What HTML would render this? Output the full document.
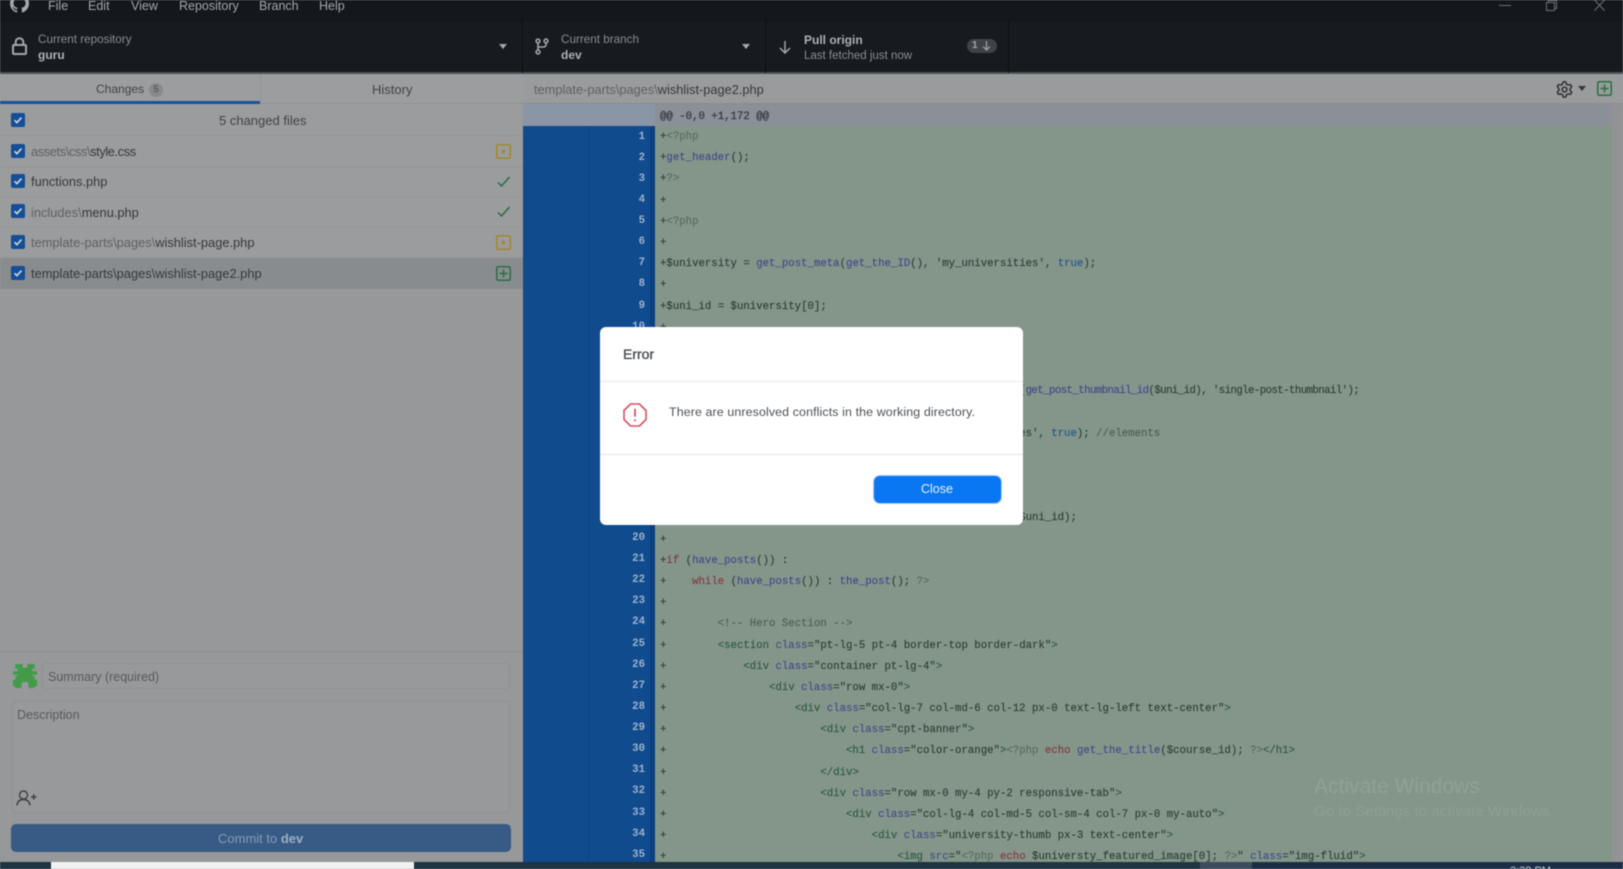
<!DOCTYPE html>
<html lang="en"><head><meta charset="utf-8"><title>GitHub Desktop</title>
<style>
*{box-sizing:border-box}
html,body{margin:0;padding:0;width:1623px;height:869px;overflow:hidden;background:#9b9d9e}
body{font-family:"Liberation Sans",sans-serif;position:relative}
.a{position:absolute}
.t{white-space:nowrap;position:absolute}
#root{position:absolute;left:0;top:0;width:1623px;height:869px;overflow:hidden;filter:blur(.45px)}
.menu{position:absolute;top:-2px;font-size:12.5px;line-height:16px;color:#a3a7ac}
.lab{font-size:11.7px;color:#888d92}
.val{font-size:12px;font-weight:bold;color:#adb1b5}
.row{position:absolute;left:0;width:523px;border-bottom:1px solid #949697;background:#9a9c9d}
.cb{position:absolute;left:11px;width:14px;height:14px;border-radius:2px;background:#144e96}
.cb svg{position:absolute;left:0;top:0}
.fn{position:absolute;left:31px;font-size:12.85px;line-height:16px;color:#36393d;white-space:nowrap}
.fn i{font-style:normal;color:#5f6265}
.st{position:absolute;left:496px;width:15px;height:15px}
#nums{position:absolute;left:588px;top:126.5px;width:57px;text-align:right;font:bold 10.7px/21.13px "Liberation Mono",monospace;color:#9cb2cd}
#nums div{height:21.13px}
#code{position:absolute;left:660px;top:127px;width:950px;height:735px;overflow:hidden;font:10.7px/21.19px "Liberation Mono",monospace;color:#2f3f37;-webkit-text-stroke:.15px currentColor}
#code div{height:21.19px;white-space:pre}
.g{color:#2f5a3e}.v{color:#464c86}.p{color:#5a6a5f}.f{color:#484789}.k{color:#843b3e}.c{color:#4e6056}.b{color:#25558c}
</style></head>
<body>
<div id="root">
<!-- title bar -->
<div class="a" style="left:0;top:0;width:1623px;height:20px;background:#14181c"></div>
<svg class="a" style="left:10px;top:-6px" width="19" height="19" viewBox="0 0 16 16"><path fill="#a6a9ad" d="M8 0C3.58 0 0 3.58 0 8c0 3.54 2.29 6.53 5.47 7.59.4.07.55-.17.55-.38 0-.19-.01-.82-.01-1.49-2.01.37-2.53-.49-2.69-.94-.09-.23-.48-.94-.82-1.13-.28-.15-.68-.52-.01-.53.63-.01 1.08.58 1.23.82.72 1.21 1.87.87 2.33.66.07-.52.28-.87.51-1.07-1.78-.2-3.64-.89-3.64-3.95 0-.87.31-1.59.82-2.15-.08-.2-.36-1.02.08-2.12 0 0 .67-.21 2.2.82.64-.18 1.32-.27 2-.27s1.36.09 2 .27c1.53-1.04 2.2-.82 2.2-.82.44 1.1.16 1.92.08 2.12.51.56.82 1.27.82 2.15 0 3.07-1.87 3.75-3.65 3.95.29.25.54.73.54 1.48 0 1.07-.01 1.93-.01 2.2 0 .21.15.46.55.38A8.01 8.01 0 0 0 16 8c0-4.42-3.58-8-8-8z"/></svg>
<div class="menu" style="left:48px">File</div>
<div class="menu" style="left:88px">Edit</div>
<div class="menu" style="left:131px">View</div>
<div class="menu" style="left:179px">Repository</div>
<div class="menu" style="left:259px">Branch</div>
<div class="menu" style="left:319px">Help</div>
<div class="a" style="left:1499px;top:5px;width:12px;height:1px;background:#6d7074"></div>
<svg class="a" style="left:1545px;top:0" width="12" height="11" viewBox="0 0 12 11"><path fill="none" stroke="#6d7074" d="M1.5 2.5h8v8h-8zM3.5 2.5V.5h8v8h-2"/></svg>
<svg class="a" style="left:1594px;top:0" width="11" height="11" viewBox="0 0 11 11"><path fill="none" stroke="#6d7074" d="M.5 0l10 10.5M10.5 0L.5 10.5"/></svg>
<!-- toolbar -->
<div class="a" style="left:0;top:20px;width:1623px;height:53px;background:#171b1f;border-top:1px solid #111418"></div>
<div class="a" style="left:0;top:72px;width:1623px;height:2px;background:#505356"></div>
<svg class="a" style="left:12px;top:37px" width="15" height="18" viewBox="0 0 15 18"><path fill="none" stroke="#a3a6aa" stroke-width="2" d="M2 8h11a1 1 0 0 1 1 1v7a1 1 0 0 1-1 1H2a1 1 0 0 1-1-1V9a1 1 0 0 1 1-1zM3.7 8V5a3.8 3.8 0 0 1 7.6 0v3"/></svg>
<div class="t lab" style="left:38px;top:33px">Current repository</div>
<div class="t val" style="left:38px;top:48px">guru</div>
<div class="a" style="left:499px;top:44px;border:4px solid transparent;border-top:5px solid #a3a6aa"></div>
<div class="a" style="left:522px;top:20px;width:1px;height:53px;background:#0d0f12"></div>
<svg class="a" style="left:535px;top:38px" width="14" height="17" viewBox="0 0 14 17"><g fill="none" stroke="#a3a6aa" stroke-width="1.6"><circle cx="3" cy="3" r="1.9"/><circle cx="11" cy="3" r="1.9"/><circle cx="3" cy="14" r="1.9"/><path d="M3 5v7M11 5v1.5a2.5 2.5 0 0 1-2.5 2.5H3"/></g></svg>
<div class="t lab" style="left:561px;top:33px">Current branch</div>
<div class="t val" style="left:561px;top:48px">dev</div>
<div class="a" style="left:742px;top:44px;border:4px solid transparent;border-top:5px solid #a3a6aa"></div>
<div class="a" style="left:765px;top:20px;width:1px;height:53px;background:#0d0f12"></div>
<svg class="a" style="left:779px;top:40px" width="12" height="14" viewBox="0 0 12 14"><path fill="none" stroke="#a3a6aa" stroke-width="1.5" d="M6 1v12M1 8l5 5 5-5"/></svg>
<div class="t val" style="left:804px;top:33px">Pull origin</div>
<div class="t lab" style="left:804px;top:50px;font-size:11.5px">Last fetched just now</div>
<div class="a" style="left:967px;top:39px;width:30px;height:14px;border-radius:7px;background:#3f4347"></div>
<div class="t" style="left:972px;top:40px;font-size:10px;font-weight:bold;color:#a3a6aa">1</div>
<svg class="a" style="left:982px;top:41px" width="9" height="10" viewBox="0 0 9 10"><path fill="none" stroke="#a3a6aa" stroke-width="1.2" d="M4.5 0v9M1 5.5L4.5 9 8 5.5"/></svg>
<div class="a" style="left:1008px;top:20px;width:1px;height:53px;background:#0d0f12"></div>
<!-- left panel -->
<div class="a" style="left:0;top:74px;width:523px;height:788px;background:#96989a"></div>
<div class="a" style="left:0;top:74px;width:523px;height:30px;background:#9c9d9f;border-bottom:1px solid #909293"></div>
<div class="t" style="left:96px;top:82px;font-size:12px;line-height:15px;color:#414448">Changes</div>
<div class="a" style="left:149px;top:83px;width:14px;height:14px;border-radius:7px;background:#87898b;color:#44474b;font-size:9.5px;line-height:14px;text-align:center">5</div>
<div class="a" style="left:0;top:101px;width:260px;height:3px;background:#17539c"></div>
<div class="a" style="left:260px;top:74px;width:1px;height:30px;background:#939596"></div>
<div class="t" style="left:372px;top:82px;font-size:13px;color:#414448">History</div>
<!-- rows -->
<div class="row" style="top:104px;height:32px"><div class="cb" style="top:9px"><svg width="14" height="14" viewBox="0 0 14 14"><path fill="none" stroke="#c8d2dc" stroke-width="1.7" d="M3.500 7.200l2.400 2.400 4.600-5"/></svg></div><div class="t" style="left:219px;top:9px;font-size:13px;color:#414448">5 changed files</div></div>
<div class="row" style="top:136px;height:31px"><div class="cb" style="top:8px"><svg width="14" height="14" viewBox="0 0 14 14"><path fill="none" stroke="#c8d2dc" stroke-width="1.7" d="M3.500 7.200l2.400 2.400 4.600-5"/></svg></div><div class="fn" style="top:8px;letter-spacing:-.4px"><i>assets\css\</i>style.css</div>
<svg class="st" style="top:8px" viewBox="0 0 15 15"><rect x=".75" y=".75" width="13.500" height="13.500" rx="1.500" fill="none" stroke="#a4872a" stroke-width="1.500"/><circle cx="7.500" cy="7.500" r="1.800" fill="#a4872a"/></svg></div>
<div class="row" style="top:167px;height:30px"><div class="cb" style="top:7px"><svg width="14" height="14" viewBox="0 0 14 14"><path fill="none" stroke="#c8d2dc" stroke-width="1.7" d="M3.500 7.200l2.400 2.400 4.600-5"/></svg></div><div class="fn" style="top:7px">functions.php</div>
<svg class="st" style="top:7px" viewBox="0 0 15 15"><path fill="none" stroke="#277044" stroke-width="1.500" d="M2 8.500l3.500 3.500L13.500 3"/></svg></div>
<div class="row" style="top:197px;height:31px"><div class="cb" style="top:7px"><svg width="14" height="14" viewBox="0 0 14 14"><path fill="none" stroke="#c8d2dc" stroke-width="1.7" d="M3.500 7.200l2.400 2.400 4.600-5"/></svg></div><div class="fn" style="top:8px"><i>includes\</i>menu.php</div>
<svg class="st" style="top:7px" viewBox="0 0 15 15"><path fill="none" stroke="#277044" stroke-width="1.500" d="M2 8.500l3.500 3.500L13.500 3"/></svg></div>
<div class="row" style="top:228px;height:30px"><div class="cb" style="top:7px"><svg width="14" height="14" viewBox="0 0 14 14"><path fill="none" stroke="#c8d2dc" stroke-width="1.7" d="M3.500 7.200l2.400 2.400 4.600-5"/></svg></div><div class="fn" style="top:7px"><i>template-parts\pages\</i>wishlist-page.php</div>
<svg class="st" style="top:7px" viewBox="0 0 15 15"><rect x=".75" y=".75" width="13.500" height="13.500" rx="1.500" fill="none" stroke="#a4872a" stroke-width="1.500"/><circle cx="7.500" cy="7.500" r="1.800" fill="#a4872a"/></svg></div>
<div class="row" style="top:258px;height:31px;background:#898c8e;border-bottom:1px solid #898c8e"><div class="cb" style="top:8px"><svg width="14" height="14" viewBox="0 0 14 14"><path fill="none" stroke="#c8d2dc" stroke-width="1.7" d="M3.500 7.200l2.400 2.400 4.600-5"/></svg></div><div class="fn" style="top:8px"><i style="color:#36393d">template-parts\pages\wishlist-page2.php</i></div>
<svg class="st" style="top:8px" viewBox="0 0 15 15"><rect x=".75" y=".75" width="13.500" height="13.500" rx="1.500" fill="none" stroke="#277044" stroke-width="1.500"/><path stroke="#277044" stroke-width="1.500" d="M7.500 3.500v8M3.500 7.500h8"/></svg></div>
<!-- commit area -->
<div class="a" style="left:0;top:651px;width:523px;height:1px;background:#8c8e8f"></div>
<svg class="a" style="left:13px;top:664px" width="24" height="24" viewBox="0 0 10 10"><path fill="#439a48" d="M1 0h3v1.500h2V0h3v2H8v1h2v1.500H8V5h1v1.500h1V9L8.500 10H6.500V8.500L6 7.500H4L3.500 8.500V10h-2L0 9V6.500h1V5h1v-.5H0V3h2V2H1z"/></svg>
<div class="a" style="left:42px;top:663px;width:468px;height:26px;border:1px solid #8f9192;border-radius:4px;background:#97999a"></div>
<div class="t" style="left:48px;top:670px;font-size:12.5px;color:#585b5e">Summary (required)</div>
<div class="a" style="left:12px;top:701px;width:498px;height:112px;border:1px solid #8f9192;border-radius:4px;background:#97999a"></div>
<div class="t" style="left:17px;top:708px;font-size:12.5px;color:#585b5e">Description</div>
<svg class="a" style="left:16px;top:790px" width="21" height="16" viewBox="0 0 21 16"><g fill="none" stroke="#3f4246" stroke-width="1.4"><circle cx="7.500" cy="5" r="4"/><path d="M1 15.500c.3-3.800 2.600-6 6.500-6s6 2.200 6.500 6M15 7h5.500M17.700 4.300v5.500"/></g></svg>
<div class="a" style="left:11px;top:824px;width:500px;height:28px;border-radius:5px;background:#375b84"></div>
<div class="t" style="left:218px;top:831px;font-size:13px;color:#839cb7">Commit to <b style="color:#9cafc3">dev</b></div>
<!-- right header -->
<div class="a" style="left:523px;top:74px;width:1100px;height:30px;background:#999b9d;border-bottom:1px solid #8c8e8f"></div>
<div class="t" style="left:534px;top:82px;font-size:12.8px;color:#5f6265">template-parts\pages\<span style="color:#36393d">wishlist-page2.php</span></div>
<svg class="a" style="left:1556px;top:81px" width="17" height="17" viewBox="0 0 16 16"><path fill="#33363a" d="M8 0a8.200 8.200 0 0 1 .701.031C9.444.095 9.990.645 10.160 1.290l.288 1.107c.018.066.079.158.212.224.231.114.454.243.668.386.123.082.233.090.299.071l1.103-.303c.644-.176 1.392.021 1.820.630.270.385.506.792.704 1.218.315.675.111 1.422-.364 1.891l-.814.806c-.049.048-.098.147-.088.294.016.257.016.515 0 .772-.010.147.038.246.088.294l.814.806c.475.469.679 1.216.364 1.891a7.977 7.977 0 0 1-.704 1.217c-.428.610-1.176.807-1.820.630l-1.102-.302c-.067-.019-.177-.011-.300.071a5.909 5.909 0 0 1-.668.386c-.133.066-.194.158-.211.224l-.290 1.106c-.168.646-.715 1.196-1.458 1.260a8.006 8.006 0 0 1-1.402 0c-.743-.064-1.289-.614-1.458-1.260l-.289-1.106c-.018-.066-.079-.158-.212-.224a5.738 5.738 0 0 1-.668-.386c-.123-.082-.233-.090-.299-.071l-1.103.303c-.644.176-1.392-.021-1.820-.630a8.120 8.120 0 0 1-.704-1.218c-.315-.675-.111-1.422.363-1.891l.815-.806c.050-.048.098-.147.088-.294a6.214 6.214 0 0 1 0-.772c.010-.147-.038-.246-.088-.294l-.815-.806C.635 6.045.431 5.298.746 4.623a7.920 7.920 0 0 1 .704-1.217c.428-.610 1.176-.807 1.820-.630l1.102.302c.067.019.177.011.300-.071.214-.143.437-.272.668-.386.133-.066.194-.158.211-.224l.290-1.106C6.009.645 6.556.095 7.299.030 7.530.010 7.764 0 8 0Zm-.571 1.525c-.036.003-.108.036-.137.146l-.289 1.105c-.147.561-.549.967-.998 1.189-.173.086-.340.183-.500.290-.417.278-.970.423-1.529.270l-1.103-.303c-.109-.030-.175.016-.195.045-.220.312-.412.644-.573.990-.014.031-.021.110.059.190l.815.806c.411.406.562.957.530 1.456a4.709 4.709 0 0 0 0 .582c.032.499-.119 1.050-.530 1.456l-.815.806c-.081.080-.073.159-.059.190.162.346.353.677.573.989.020.030.085.076.195.046l1.102-.303c.560-.153 1.113-.008 1.530.270.161.107.328.204.501.290.447.222.850.629.997 1.189l.289 1.105c.029.109.101.143.137.146a6.600 6.600 0 0 0 1.142 0c.036-.003.108-.036.137-.146l.289-1.105c.147-.561.549-.967.998-1.189.173-.086.340-.183.500-.290.417-.278.970-.423 1.529-.270l1.103.303c.109.029.175-.016.195-.045.220-.313.411-.644.573-.990.014-.031.021-.110-.059-.190l-.815-.806c-.411-.406-.562-.957-.530-1.456a4.709 4.709 0 0 0 0-.582c-.032-.499.119-1.050.530-1.456l.815-.806c.081-.080.073-.159.059-.190a6.464 6.464 0 0 0-.573-.989c-.020-.030-.085-.076-.195-.046l-1.102.303c-.560.153-1.113.008-1.530-.270a4.440 4.440 0 0 0-.501-.290c-.447-.222-.850-.629-.997-1.189l-.289-1.105c-.029-.110-.101-.143-.137-.146a6.600 6.600 0 0 0-1.142 0ZM11 8a3 3 0 1 1-6 0 3 3 0 0 1 6 0ZM9.500 8a1.500 1.500 0 1 0-3.001.001A1.500 1.500 0 0 0 9.500 8Z"/></svg>
<div class="a" style="left:1578px;top:86px;border:4px solid transparent;border-top:5px solid #33363a"></div>
<svg class="a" style="left:1597px;top:81px" width="15" height="15" viewBox="0 0 15 15"><rect x=".75" y=".75" width="13.500" height="13.500" rx="1.500" fill="none" stroke="#277044" stroke-width="1.500"/><path stroke="#277044" stroke-width="1.500" d="M7.500 3.500v8M3.500 7.500h8"/></svg>
<!-- diff -->
<div class="a" style="left:523px;top:104px;width:132px;height:22px;background:#8a96a6"></div>
<div class="a" style="left:655px;top:104px;width:957px;height:22px;background:#8a8f98"></div>
<div class="a" style="left:1612px;top:104px;width:11px;height:758px;background:#939395"></div>
<div class="a" style="left:523px;top:126px;width:132px;height:736px;background:#104b8e"></div>
<div class="a" style="left:588px;top:126px;width:1px;height:736px;background:#0b4280"></div>
<div class="a" style="left:650px;top:126px;width:5px;height:736px;background:#0a4084"></div>
<div class="a" style="left:655px;top:126px;width:957px;height:736px;background:#84968a"></div>
<div class="t" style="left:660px;top:107px;font:10.7px/21px 'Liberation Mono',monospace;color:#2e3339;-webkit-text-stroke:.15px currentColor">@@ -0,0 +1,172 @@</div>
<div id="nums"><div>1</div><div>2</div><div>3</div><div>4</div><div>5</div><div>6</div><div>7</div><div>8</div><div>9</div><div>10</div><div>11</div><div>12</div><div>13</div><div>14</div><div>15</div><div>16</div><div>17</div><div>18</div><div>19</div><div>20</div><div>21</div><div>22</div><div>23</div><div>24</div><div>25</div><div>26</div><div>27</div><div>28</div><div>29</div><div>30</div><div>31</div><div>32</div><div>33</div><div>34</div><div>35</div></div>
<div id="code">
<div>+<span class="p">&lt;?php</span></div>
<div>+<span class="f">get_header</span>();</div>
<div>+<span class="p">?&gt;</span></div>
<div>+</div>
<div>+<span class="p">&lt;?php</span></div>
<div>+</div>
<div>+$university = <span class="f">get_post_meta</span>(<span class="f">get_the_ID</span>(), 'my_universities', <span class="b">true</span>);</div>
<div>+</div>
<div>+$uni_id = $university[0];</div>
<div>+</div>
<div>+</div>
<div>+</div>
<div>+$universty_featured_image = wp_get_attachment_image_src(<span style="letter-spacing:-.56px"><span class="f">get_post_thumbnail_id</span>($uni_id), 'single-post-thumbnail');</span></div>
<div>+</div>
<div>+$university_features = get_post_meta($uni_id, 'uni_curses', <span class="b">true</span>); <span class="c">//elements</span></div>
<div>+</div>
<div>+</div>
<div>+</div>
<div>+$course_id = get_post_meta(get_the_ID(), 'my_courses', $uni_id);</div>
<div>+</div>
<div>+<span class="k">if</span> (<span class="f">have_posts</span>()) :</div>
<div>+    <span class="k">while</span> (<span class="f">have_posts</span>()) : <span class="f">the_post</span>(); <span class="p">?&gt;</span></div>
<div>+</div>
<div>+        <span class="c">&lt;!-- Hero Section --&gt;</span></div>
<div>+        <span class="g">&lt;section</span> <span class="v">class</span>="pt-lg-5 pt-4 border-top border-dark"<span class="g">&gt;</span></div>
<div>+            <span class="g">&lt;div</span> <span class="v">class</span>="container pt-lg-4"<span class="g">&gt;</span></div>
<div>+                <span class="g">&lt;div</span> <span class="v">class</span>="row mx-0"<span class="g">&gt;</span></div>
<div>+                    <span class="g">&lt;div</span> <span class="v">class</span>="col-lg-7 col-md-6 col-12 px-0 text-lg-left text-center"<span class="g">&gt;</span></div>
<div>+                        <span class="g">&lt;div</span> <span class="v">class</span>="cpt-banner"<span class="g">&gt;</span></div>
<div>+                            <span class="g">&lt;h1</span> <span class="v">class</span>="color-orange"<span class="g">&gt;</span><span class="p">&lt;?php</span> <span class="k">echo</span> <span class="f">get_the_title</span>($course_id); <span class="p">?&gt;</span><span class="g">&lt;/h1&gt;</span></div>
<div>+                        <span class="g">&lt;/div&gt;</span></div>
<div>+                        <span class="g">&lt;div</span> <span class="v">class</span>="row mx-0 my-4 py-2 responsive-tab"<span class="g">&gt;</span></div>
<div>+                            <span class="g">&lt;div</span> <span class="v">class</span>="col-lg-4 col-md-5 col-sm-4 col-7 px-0 my-auto"<span class="g">&gt;</span></div>
<div>+                                <span class="g">&lt;div</span> <span class="v">class</span>="university-thumb px-3 text-center"<span class="g">&gt;</span></div>
<div>+                                    <span class="g">&lt;img</span> <span class="v">src</span>="<span class="p">&lt;?php</span> <span class="k">echo</span> $universty_featured_image[0]; <span class="p">?&gt;</span>" <span class="v">class</span>="img-fluid"<span class="g">&gt;</span></div>
</div>
<!-- watermark -->
<div class="t" style="left:1314px;top:775px;font-size:21px;color:#8fa295">Activate Windows</div>
<div class="t" style="left:1314px;top:803px;font-size:15.2px;color:#8c9f92">Go to Settings to activate Windows.</div>
<!-- taskbar -->
<div class="a" style="left:0;top:862px;width:1623px;height:7px;background:#1f3340"></div>
<div class="a" style="left:51px;top:862px;width:363px;height:7px;background:#f1f1f1"></div>
<div class="a" style="left:1252px;top:862px;width:371px;height:7px;background:#1c2d48"></div>
<div class="a" style="left:1200px;top:862px;width:52px;height:7px;background:#3c4c5c"></div>
<div class="t" style="left:1510px;top:865px;font-size:11px;color:#c8ccd0">3:38 PM</div>
<!-- modal -->
<div class="a" style="left:600px;top:327px;width:423px;height:198px;background:#fff;border-radius:6px"></div>
<div class="a" style="left:600px;top:381px;width:423px;height:1px;background:#e8e9ea"></div>
<div class="a" style="left:600px;top:454px;width:423px;height:1px;background:#e3e4e6"></div>
<div class="t" style="left:623px;top:346px;font-size:14px;color:#4a4d51;-webkit-text-stroke:.35px #4a4d51">Error</div>
<svg class="a" style="left:623px;top:403px" width="24" height="24" viewBox="0 0 24 24"><path fill="none" stroke="#d9505f" stroke-width="1.600" d="M7.500 1h9L23 7.500v9L16.500 23h-9L1 16.500v-9z"/><path stroke="#d9505f" stroke-width="1.800" stroke-linecap="round" d="M12 6.500v6.500M12 17v.5"/></svg>
<div class="t" style="left:669px;top:405px;font-size:12.4px;letter-spacing:.12px;color:#4e5155">There are unresolved conflicts in the working directory.</div>
<div class="a" style="left:874px;top:476px;width:127px;height:27px;border-radius:6px;background:#0a77f2;box-shadow:0 0 0 1px #a8cffa"></div>
<div class="t" style="left:921px;top:482px;font-size:12.5px;color:#e6f1fe">Close</div>
</div>
</body></html>
